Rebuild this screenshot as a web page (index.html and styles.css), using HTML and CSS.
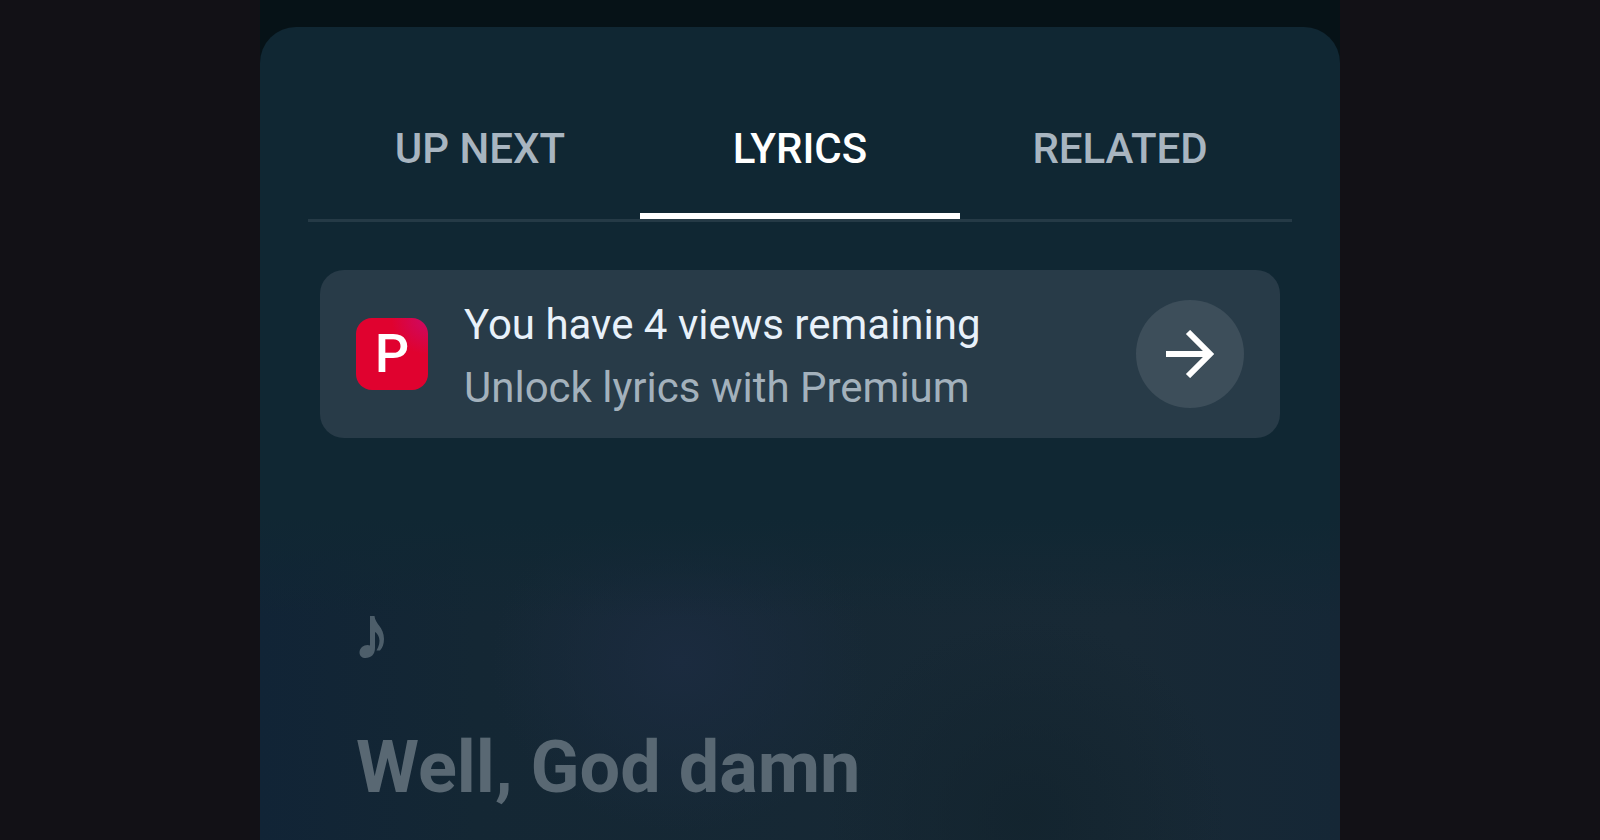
FILE: index.html
```html
<!DOCTYPE html>
<html lang="en">
<head>
<meta charset="utf-8">
<meta name="viewport" content="width=device-width, initial-scale=1">
<title>Lyrics</title>
<link rel="stylesheet" href="styles.css">
</head>
<body>
<div class="screen">
  <main class="sheet">
    <div class="tabs" role="tablist">
      <button class="tab" type="button" role="tab" aria-selected="false">UP NEXT</button>
      <button class="tab tab-active" type="button" role="tab" aria-selected="true">LYRICS</button>
      <button class="tab" type="button" role="tab" aria-selected="false">RELATED</button>
    </div>
    <section class="promo">
      <div class="badge" aria-hidden="true">P</div>
      <div class="promo-text">
        <p class="promo-title">You have 4 views remaining</p>
        <p class="promo-sub">Unlock lyrics with Premium</p>
      </div>
      <button class="go" type="button" aria-label="Unlock lyrics">
        <svg class="go-icon" viewBox="0 0 48 48" aria-hidden="true">
          <path d="M0 24H42M22 2L44 24L22 46" fill="none" stroke="#fff" stroke-width="6"/>
        </svg>
      </button>
    </section>
    <section class="lyrics">
      <svg class="note" viewBox="0 0 28 44" role="img" aria-label="Music">
        <path d="M14 0H18.500C19 8 28 11 28 23C28 28 26.500 32 24 34.500H20.500C23 30 24.300 26 23 21.500C22 18.500 20.500 17 19 16V32C19 38.500 15 42 9.500 42C6 42 3.500 40 3.500 36.500C3.500 32 7.500 29 11.500 29C12.500 29 13.400 29.200 14 29.500Z"/>
      </svg>
      <p class="line">Well, God damn</p>
    </section>
  </main>
</div>
</body>
</html>
```
FILE: styles.css
```css
* {
  box-sizing: border-box;
}

body {
  margin: 0;
  background: #121116;
  font-family: Roboto, "DejaVu Sans", sans-serif;
  font-size: 42px;
}

p {
  margin: 0;
}

button {
  padding: 0;
  border: 0;
  background: none;
  font: inherit;
}

.screen {
  display: flex;
  flex-direction: column;
  width: 67.5%;
  min-height: 100vh;
  margin: 0 auto;
  padding-top: 27px;
  background: #061217;
}

.sheet {
  flex: 1;
  padding: 0 48px;
  border-radius: 36px 36px 0 0;
  background:
    linear-gradient(#102733 0, #102733 490px, #10273300 590px),
    radial-gradient(ellipse 190px 170px at 39% 635px, #1b2b3f, #1b2b3f00),
    radial-gradient(ellipse 200px 200px at 71% 790px, #12232dcc, #12232d00),
    linear-gradient(90deg, #112436, #142734 20%, #182935 80%, #152736);
}

.tabs {
  display: flex;
  padding: 0 12px;
  border-bottom: 3px solid #253a46;
}

.tab {
  flex: 1;
  height: 192px;
  padding-top: 58px;
  border-bottom: 6px solid transparent;
  color: #a8b5c0;
  font-weight: 500;
  line-height: 48px;
}

.tab-active {
  border-color: #fff;
  color: #fff;
}

.promo {
  display: flex;
  align-items: center;
  gap: 36px;
  margin: 48px 12px 0;
  padding: 19px 36px;
  border-radius: 24px;
  background: #283b48;
}

.badge {
  width: 72px;
  height: 72px;
  border-radius: 16px;
  background: radial-gradient(circle at 100% 0, #cc0a66, #e0022f 36%);
  color: #fff;
  font-size: 54px;
  font-weight: 500;
  line-height: 72px;
  text-align: center;
}

.promo-text {
  flex: 1;
  padding-top: 4px;
  line-height: 63px;
}

.promo-title {
  color: #e8f1fa;
}

.promo-sub {
  color: #a3b1bc;
}

.go {
  display: grid;
  place-items: center;
  width: 108px;
  height: 108px;
  border-radius: 50%;
  background: #3d4e5a;
}

.go-icon {
  width: 48px;
  height: 48px;
}

.lyrics {
  display: grid;
  gap: 66px;
  padding: 178px 48px 24px;
}

.line {
  color: #596873;
  font-size: 72px;
  font-weight: 700;
  line-height: 84px;
}

.note {
  width: 28px;
  height: 44px;
  fill: #4d5e6a;
}
```
